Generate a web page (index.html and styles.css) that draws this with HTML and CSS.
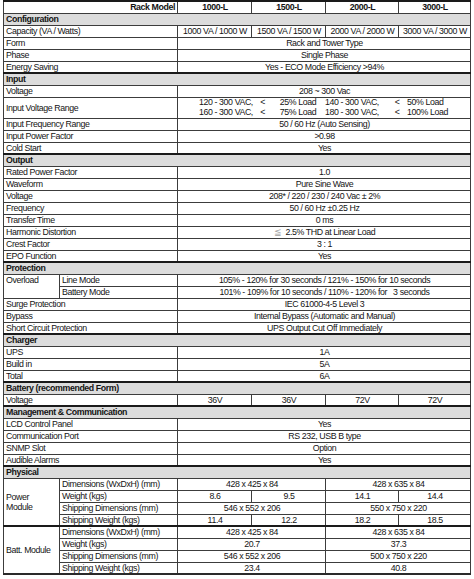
FILE: index.html
```html
<!DOCTYPE html>
<html>
<head>
<meta charset="utf-8">
<link rel="stylesheet" href="styles.css">
</head>
<body>
<table class="spec">
<colgroup>
<col class="w1"><col class="w2"><col class="w3"><col class="w4"><col class="w5"><col class="w6">
</colgroup>
<thead>
<tr class="hdr"><th colspan="2" class="r">Rack Model</th><th>1000-L</th><th>1500-L</th><th>2000-L</th><th>3000-L</th></tr>
</thead>
<tbody>
<tr class="sec first"><td colspan="6">Configuration</td></tr>
<tr><td colspan="2">Capacity (VA / Watts)</td><td class="c">1000 VA / 1000 W</td><td class="c">1500 VA / 1500 W</td><td class="c">2000 VA / 2000 W</td><td class="c">3000 VA / 3000 W</td></tr>
<tr><td colspan="2">Form</td><td colspan="4" class="c">Rack and Tower Type</td></tr>
<tr><td colspan="2">Phase</td><td colspan="4" class="c">Single Phase</td></tr>
<tr><td colspan="2">Energy Saving</td><td colspan="4" class="c">Yes - ECO Mode Efficiency &gt;94%</td></tr>

<tr class="sec"><td colspan="6">Input</td></tr>
<tr><td colspan="2">Voltage</td><td colspan="4" class="c">208 ~ 300 Vac</td></tr>
<tr class="dbl"><td colspan="2">Input Voltage Range</td><td colspan="4">
<div class="ivr">
<span class="l">120 - 300 VAC,</span><span class="c">&lt;</span><span class="c">25% Load</span><span class="l">140 - 300 VAC,</span><span class="c">&lt;</span><span class="r">50% Load</span>
<span class="l">160 - 300 VAC,</span><span class="c">&lt;</span><span class="c">75% Load</span><span class="l">180 - 300 VAC,</span><span class="c">&lt;</span><span class="r">100% Load</span>
</div>
</td></tr>
<tr><td colspan="2">Input Frequency Range</td><td colspan="4" class="c">50 / 60 Hz (Auto Sensing)</td></tr>
<tr><td colspan="2">Input Power Factor</td><td colspan="4" class="c">&gt;0.98</td></tr>
<tr><td colspan="2">Cold Start</td><td colspan="4" class="c">Yes</td></tr>

<tr class="sec"><td colspan="6">Output</td></tr>
<tr><td colspan="2">Rated Power Factor</td><td colspan="4" class="c">1.0</td></tr>
<tr><td colspan="2">Waveform</td><td colspan="4" class="c">Pure Sine Wave</td></tr>
<tr><td colspan="2">Voltage</td><td colspan="4" class="c">208* / 220 / 230 / 240 Vac ± 2%</td></tr>
<tr><td colspan="2">Frequency</td><td colspan="4" class="c">50 / 60 Hz ±0.25 Hz</td></tr>
<tr><td colspan="2">Transfer Time</td><td colspan="4" class="c">0 ms</td></tr>
<tr><td colspan="2">Harmonic Distortion</td><td colspan="4" class="c"><span class="le">≦</span>&nbsp; 2.5% THD at Linear Load</td></tr>
<tr><td colspan="2">Crest Factor</td><td colspan="4" class="c">3 : 1</td></tr>
<tr><td colspan="2">EPO Function</td><td colspan="4" class="c">Yes</td></tr>

<tr class="sec"><td colspan="6">Protection</td></tr>
<tr><td rowspan="2" class="top">Overload</td><td>Line Mode</td><td colspan="4" class="c">105% - 120% for 30 seconds / 121% - 150% for 10 seconds</td></tr>
<tr><td>Battery Mode</td><td colspan="4" class="c">101% - 109% for 10 seconds / 110% - 120% for &nbsp;&nbsp;3 seconds</td></tr>
<tr><td colspan="2">Surge Protection</td><td colspan="4" class="c">IEC 61000-4-5 Level 3</td></tr>
<tr><td colspan="2">Bypass</td><td colspan="4" class="c">Internal Bypass (Automatic and Manual)</td></tr>
<tr><td colspan="2">Short Circuit Protection</td><td colspan="4" class="c">UPS Output Cut Off Immediately</td></tr>

<tr class="sec"><td colspan="6">Charger</td></tr>
<tr><td colspan="2">UPS</td><td colspan="4" class="c">1A</td></tr>
<tr><td colspan="2">Build in</td><td colspan="4" class="c">5A</td></tr>
<tr><td colspan="2">Total</td><td colspan="4" class="c">6A</td></tr>

<tr class="sec"><td colspan="6">Battery (recommended Form)</td></tr>
<tr><td colspan="2">Voltage</td><td class="c">36V</td><td class="c">36V</td><td class="c">72V</td><td class="c">72V</td></tr>

<tr class="sec"><td colspan="6">Management &amp; Communication</td></tr>
<tr><td colspan="2">LCD Control Panel</td><td colspan="4" class="c">Yes</td></tr>
<tr><td colspan="2">Communication Port</td><td colspan="4" class="c">RS 232, USB B type</td></tr>
<tr><td colspan="2">SNMP Slot</td><td colspan="4" class="c">Option</td></tr>
<tr><td colspan="2">Audible Alarms</td><td colspan="4" class="c">Yes</td></tr>

<tr class="sec"><td colspan="6">Physical</td></tr>
<tr><td rowspan="4" class="mod">Power<br>Module</td><td>Dimensions (WxDxH) (mm)</td><td colspan="2" class="c">428 x 425 x 84</td><td colspan="2" class="c">428 x 635 x 84</td></tr>
<tr><td>Weight (kgs)</td><td class="c">8.6</td><td class="c">9.5</td><td class="c">14.1</td><td class="c">14.4</td></tr>
<tr><td>Shipping Dimensions (mm)</td><td colspan="2" class="c">546 x 552 x 206</td><td colspan="2" class="c">550 x 750 x 220</td></tr>
<tr><td>Shipping Weight (kgs)</td><td class="c">11.4</td><td class="c">12.2</td><td class="c">18.2</td><td class="c">18.5</td></tr>
<tr class="split"><td rowspan="4" class="mod">Batt. Module</td><td>Dimensions (WxDxH) (mm)</td><td colspan="2" class="c">428 x 425 x 84</td><td colspan="2" class="c">428 x 635 x 84</td></tr>
<tr><td>Weight (kgs)</td><td colspan="2" class="c">20.7</td><td colspan="2" class="c">37.3</td></tr>
<tr><td>Shipping Dimensions (mm)</td><td colspan="2" class="c">546 x 552 x 206</td><td colspan="2" class="c">500 x 750 x 220</td></tr>
<tr class="last"><td>Shipping Weight (kgs)</td><td colspan="2" class="c">23.4</td><td colspan="2" class="c">40.8</td></tr>
</tbody>
</table>
</body>
</html>
```

FILE: styles.css
```css
html, body {
  margin: 0;
  padding: 0;
  background: #ffffff;
}

body {
  font-family: "Liberation Sans", Arial, sans-serif;
  font-size: 8.8px;
  letter-spacing: -0.4px;
  color: #141414;
}

.spec {
  margin-left: 3px;
  border-collapse: collapse;
  table-layout: fixed;
  width: 467px;
  border-top: 2px solid #1a1a1a;
  border-bottom: 2px solid #2a2a2a;
}

.w1 { width: 56px; }
.w2 { width: 118px; }
.w3 { width: 74px; }
.w4 { width: 74px; }
.w5 { width: 73px; }
.w6 { width: 72px; }

.spec tr {
  height: 12px;
}

.spec th,
.spec td {
  border: 1px solid #3c3c3c;
  padding: 0 1px 0 2px;
  line-height: 10px;
  height: 10px;
  white-space: nowrap;
  overflow: hidden;
  vertical-align: middle;
  text-align: left;
  font-weight: normal;
}

.spec .hdr th {
  font-weight: bold;
  text-align: center;
}

.spec .hdr th.r {
  text-align: right;
  padding-right: 2px;
}

.spec .sec td {
  background: #dcdcdc;
  font-weight: bold;
  border-top: 2px solid #1a1a1a;
}

.spec .sec.first td {
  border-top: 1px solid #3c3c3c;
}

.spec .split td {
  border-top: 2px solid #1a1a1a;
}

.spec td.c {
  text-align: center;
}

.spec td.top {
  vertical-align: top;
}

.spec td.mod {
  white-space: normal;
}

.spec .dbl {
  height: 21px;
}

.spec .dbl td {
  height: 19px;
}

.ivr {
  display: grid;
  grid-template-columns: 55px 17px 54px 62px 20px 36px;
  padding-left: 19px;
  line-height: 9.5px;
}

.ivr .l { text-align: left; }
.ivr .c { text-align: center; }
.ivr .r { text-align: right; }

.le {
  color: #a0a0a0;
}
```
